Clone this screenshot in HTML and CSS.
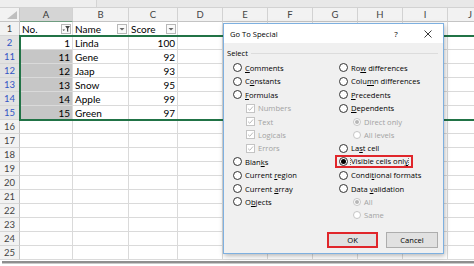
FILE: index.html
```html
<!DOCTYPE html>
<html>
<head>
<meta charset="utf-8">
<title>Go To Special</title>
<link rel="stylesheet" href="styles.css">
</head>
<body>
<div class="app">
  <div class="ribbon"><span class="namebox"></span><span class="fx"></span></div>
  <div class="sheet">
    <div class="corner"><svg width="10" height="8" viewBox="0 0 10 8"><polygon points="10,0 10,8 0,8" fill="#bfbfbf"/></svg></div>
    <div class="ch sel">A</div><div class="ch">B</div><div class="ch">C</div><div class="ch">D</div><div class="ch">E</div><div class="ch">F</div><div class="ch">G</div><div class="ch">H</div><div class="ch">I</div><div class="ch">J</div>

    <div class="rh">1</div>
    <div class="c hd">No.<span class="fb"><svg width="8" height="8" viewBox="0 0 8 8"><polygon points="0.5,4.5 3,4.5 1.75,6" fill="#444"/><polygon points="3.2,1 8,1 6.2,3.4 6.2,7 5,6.3 5,3.4" fill="#444"/></svg></span></div>
    <div class="c hd">Name<span class="fb"><svg width="8" height="8" viewBox="0 0 8 8"><polygon points="1.5,3 6.5,3 4,5.6" fill="#666"/></svg></span></div>
    <div class="c hd">Score<span class="fb"><svg width="8" height="8" viewBox="0 0 8 8"><polygon points="1.5,3 6.5,3 4,5.6" fill="#666"/></svg></span></div>
    <div class="c"></div><div class="c"></div><div class="c"></div><div class="c"></div><div class="c"></div><div class="c"></div><div class="c"></div>

    <div class="rh f">2</div><div class="c n">1</div><div class="c">Linda</div><div class="c n">100</div>
    <div class="c"></div><div class="c"></div><div class="c"></div><div class="c"></div><div class="c"></div><div class="c"></div><div class="c"></div>
    <div class="rh f">11</div><div class="c n g">11</div><div class="c">Gene</div><div class="c n">92</div>
    <div class="c"></div><div class="c"></div><div class="c"></div><div class="c"></div><div class="c"></div><div class="c"></div><div class="c"></div>
    <div class="rh f">12</div><div class="c n g">12</div><div class="c">Jaap</div><div class="c n">93</div>
    <div class="c"></div><div class="c"></div><div class="c"></div><div class="c"></div><div class="c"></div><div class="c"></div><div class="c"></div>
    <div class="rh f">13</div><div class="c n g">13</div><div class="c">Snow</div><div class="c n">95</div>
    <div class="c"></div><div class="c"></div><div class="c"></div><div class="c"></div><div class="c"></div><div class="c"></div><div class="c"></div>
    <div class="rh f">14</div><div class="c n g">14</div><div class="c">Apple</div><div class="c n">99</div>
    <div class="c"></div><div class="c"></div><div class="c"></div><div class="c"></div><div class="c"></div><div class="c"></div><div class="c"></div>
    <div class="rh f">15</div><div class="c n g">15</div><div class="c">Green</div><div class="c n">97</div>
    <div class="c"></div><div class="c"></div><div class="c"></div><div class="c"></div><div class="c"></div><div class="c"></div><div class="c"></div>

    <div class="rh">16</div><div class="c"></div><div class="c"></div><div class="c"></div><div class="c"></div><div class="c"></div><div class="c"></div><div class="c"></div><div class="c"></div><div class="c"></div><div class="c"></div>
    <div class="rh">17</div><div class="c"></div><div class="c"></div><div class="c"></div><div class="c"></div><div class="c"></div><div class="c"></div><div class="c"></div><div class="c"></div><div class="c"></div><div class="c"></div>
    <div class="rh">18</div><div class="c"></div><div class="c"></div><div class="c"></div><div class="c"></div><div class="c"></div><div class="c"></div><div class="c"></div><div class="c"></div><div class="c"></div><div class="c"></div>
    <div class="rh">19</div><div class="c"></div><div class="c"></div><div class="c"></div><div class="c"></div><div class="c"></div><div class="c"></div><div class="c"></div><div class="c"></div><div class="c"></div><div class="c"></div>
    <div class="rh">20</div><div class="c"></div><div class="c"></div><div class="c"></div><div class="c"></div><div class="c"></div><div class="c"></div><div class="c"></div><div class="c"></div><div class="c"></div><div class="c"></div>
    <div class="rh">21</div><div class="c"></div><div class="c"></div><div class="c"></div><div class="c"></div><div class="c"></div><div class="c"></div><div class="c"></div><div class="c"></div><div class="c"></div><div class="c"></div>
    <div class="rh">22</div><div class="c"></div><div class="c"></div><div class="c"></div><div class="c"></div><div class="c"></div><div class="c"></div><div class="c"></div><div class="c"></div><div class="c"></div><div class="c"></div>
    <div class="rh">23</div><div class="c"></div><div class="c"></div><div class="c"></div><div class="c"></div><div class="c"></div><div class="c"></div><div class="c"></div><div class="c"></div><div class="c"></div><div class="c"></div>
    <div class="rh">24</div><div class="c"></div><div class="c"></div><div class="c"></div><div class="c"></div><div class="c"></div><div class="c"></div><div class="c"></div><div class="c"></div><div class="c"></div><div class="c"></div>
    <div class="rh">25</div><div class="c"></div><div class="c"></div><div class="c"></div><div class="c"></div><div class="c"></div><div class="c"></div><div class="c"></div><div class="c"></div><div class="c"></div><div class="c"></div>

    <div class="selbox"><span class="handle"></span></div>
  </div>
  <div class="shadow"></div>

  <div class="dialog">
    <div class="titlebar">
      <span class="title">Go To Special</span>
      <span class="help">?</span>
      <span class="close"><svg width="8" height="8" viewBox="0 0 8 8"><path d="M0.5 0.5 L7.5 7.5 M7.5 0.5 L0.5 7.5" stroke="#222" stroke-width="0.9" fill="none"/></svg></span>
    </div>
    <div class="dbody">
      <div class="group"><span>Select</span><i class="rule"></i></div>
      <div class="cols">
        <div class="col left">
          <div class="opt"><span class="radio"></span><span><u>C</u>omments</span></div>
          <div class="opt"><span class="radio"></span><span>C<u>o</u>nstants</span></div>
          <div class="opt"><span class="radio"></span><span><u>F</u>ormulas</span></div>
          <div class="opt sub"><span class="check"><svg width="7" height="7" viewBox="0 0 7 7"><path d="M1 3.6 L2.8 5.3 L6 1.5" stroke="#b4b4b4" stroke-width="0.9" fill="none"/></svg></span><span>Numbers</span></div>
          <div class="opt sub"><span class="check"><svg width="7" height="7" viewBox="0 0 7 7"><path d="M1 3.6 L2.8 5.3 L6 1.5" stroke="#b4b4b4" stroke-width="0.9" fill="none"/></svg></span><span>Text</span></div>
          <div class="opt sub"><span class="check"><svg width="7" height="7" viewBox="0 0 7 7"><path d="M1 3.6 L2.8 5.3 L6 1.5" stroke="#b4b4b4" stroke-width="0.9" fill="none"/></svg></span><span>Logicals</span></div>
          <div class="opt sub"><span class="check"><svg width="7" height="7" viewBox="0 0 7 7"><path d="M1 3.6 L2.8 5.3 L6 1.5" stroke="#b4b4b4" stroke-width="0.9" fill="none"/></svg></span><span>Errors</span></div>
          <div class="opt"><span class="radio"></span><span>Blan<u>k</u>s</span></div>
          <div class="opt"><span class="radio"></span><span>Current <u>r</u>egion</span></div>
          <div class="opt"><span class="radio"></span><span>Current <u>a</u>rray</span></div>
          <div class="opt"><span class="radio"></span><span>O<u>b</u>jects</span></div>
        </div>
        <div class="col right">
          <div class="opt"><span class="radio"></span><span>Ro<u>w</u> differences</span></div>
          <div class="opt"><span class="radio"></span><span>Colu<u>m</u>n differences</span></div>
          <div class="opt"><span class="radio"></span><span><u>P</u>recedents</span></div>
          <div class="opt"><span class="radio"></span><span><u>D</u>ependents</span></div>
          <div class="opt sub"><span class="radio on"></span><span>Direct only</span></div>
          <div class="opt sub"><span class="radio"></span><span>All levels</span></div>
          <div class="opt"><span class="radio"></span><span>La<u>s</u>t cell</span></div>
          <div class="opt"><span class="hl"><span class="radio on"></span><span class="focus">Visible cells onl<u>y</u></span></span></div>
          <div class="opt"><span class="radio"></span><span>Condi<u>t</u>ional formats</span></div>
          <div class="opt"><span class="radio"></span><span>Data <u>v</u>alidation</span></div>
          <div class="opt sub"><span class="radio on"></span><span>All</span></div>
          <div class="opt sub"><span class="radio"></span><span>Same</span></div>
        </div>
      </div>
      <div class="buttons">
        <span class="btn ok">OK</span>
        <span class="btn cancel">Cancel</span>
      </div>
    </div>
  </div>
</div>
</body>
</html>
```

FILE: styles.css
```css
* { box-sizing: border-box; }
html, body { margin: 0; padding: 0; }
body {
  width: 474px;
  height: 266px;
  overflow: hidden;
  background: #fff;
  font-family: Lato, "Liberation Sans", sans-serif;
}
.app {
  position: relative;
  width: 474px;
  height: 266px;
  overflow: hidden;
}

/* top strip (formula bar remnant) */
.ribbon {
  height: 8px;
  display: flex;
  background: #e8e8e8;
  border-bottom: 1px solid #d2d2d2;
}
.namebox {
  width: 97px;
  background: #eeeeee;
  border-right: 1px solid #d4d4d4;
}
.fx { flex: 1; }

/* worksheet grid */
.sheet {
  position: relative;
  display: grid;
  grid-template-columns: 20px 53px 56px 49px repeat(7, 45px);
  grid-auto-rows: 14px;
  width: 493px;
  font-size: 10px;
  color: #000;
}
.corner {
  background: #f2f2f2;
  border-right: 1px solid #c8c8c8;
  border-bottom: 1px solid #c4c4c4;
  display: flex;
  align-items: flex-end;
  justify-content: flex-end;
  padding: 0 2px 2px 0;
}
.ch {
  background: #f2f2f2;
  border-right: 1px solid #d2d2d2;
  border-bottom: 1px solid #c4c4c4;
  color: #444;
  font-size: 9.5px;
  display: flex;
  align-items: center;
  justify-content: center;
}
.ch.sel {
  background: #d5d5d5;
  color: #333;
  border-bottom: 1px solid #6f9c80;
}
.rh {
  background: #f2f2f2;
  border-right: 1px solid #c4c4c4;
  border-bottom: 1px solid #d6d6d6;
  color: #444;
  font-size: 9.5px;
  display: flex;
  align-items: center;
  justify-content: center;
}
.rh.f {
  color: #3356c4;
  background: #e2e2e2;
}
.c {
  border-right: 1px solid #dadada;
  border-bottom: 1px solid #dadada;
  display: flex;
  align-items: center;
  padding: 1px 2px 0 2px;
  white-space: nowrap;
  overflow: hidden;
}
.c.n { justify-content: flex-end; }
.c.g { background: #c6c6c6; }
.c.hd { padding-right: 1px; }
.fb {
  margin-left: auto;
  width: 10px;
  height: 10px;
  border: 1px solid #b8b8b8;
  background: #fafafa;
  display: flex;
  align-items: center;
  justify-content: center;
  flex: none;
}

/* selection rectangle overlaying A2:A15 */
.selbox {
  position: absolute;
  grid-column: 2;
  grid-row: 3 / 9;
  top: -1px;
  left: -1px;
  right: -1px;
  bottom: -1px;
  border: 2px solid #217346;
}
.handle {
  position: absolute;
  right: -4px;
  bottom: -4px;
  width: 5px;
  height: 5px;
  background: #217346;
  border: 1px solid #fff;
}

.shadow {
  height: 6px;
  margin-left: 2px;
  background: linear-gradient(#ffffff 0 1px, #8e8e8e 1px 3px, #c9c9c9 3px 4px, #ffffff 4px);
}

/* dialog window */
.dialog {
  position: absolute;
  left: 223px;
  top: 23px;
  width: 221px;
  height: 231px;
  border: 1px solid #7eb0e0;
  background: #f0f0f0;
  box-shadow: 1px 2px 5px rgba(0, 0, 0, 0.28);
  display: flex;
  flex-direction: column;
  font-family: "Open Sans", "Noto Sans", sans-serif;
  font-size: 7.6px;
  color: #000;
}
.titlebar {
  flex: none;
  height: 19px;
  background: #fff;
  display: flex;
  align-items: center;
  padding-left: 6px;
}
.title { flex: 1; font-size: 7.6px; }
.help {
  width: 20px;
  text-align: center;
  font-size: 8px;
}
.close {
  width: 20px;
  margin-left: 12px;
  margin-right: 5px;
  display: flex;
  justify-content: center;
}
.dbody {
  flex: 1;
  display: flex;
  flex-direction: column;
  padding: 4px 5px 5px 3px;
}
.group {
  height: 12px;
  display: flex;
  align-items: center;
  gap: 3px;
}
.group .rule {
  flex: 1;
  border-top: 1px solid #dcdcdc;
}
.cols {
  display: flex;
  margin: 2.3px 0 0 6px;
}
.col {
  display: flex;
  flex-direction: column;
}
.col.left { width: 106px; }
.opt {
  height: 13.4px;
  display: flex;
  align-items: center;
  white-space: nowrap;
}
.opt u {
  text-decoration-thickness: 1px;
  text-underline-offset: 1px;
}
.radio {
  flex: none;
  width: 9px;
  height: 9px;
  border: 1px solid #333;
  border-radius: 50%;
  background: #fff;
  margin-right: 3px;
  display: flex;
  align-items: center;
  justify-content: center;
}
.radio.on::after {
  content: "";
  width: 5px;
  height: 5px;
  border-radius: 50%;
  background: #000;
}
.sub { color: #a2a2a2; }
.check {
  flex: none;
  width: 9px;
  height: 9px;
  border: 1px solid #c4c4c4;
  background: #fff;
  margin: 0 3px 0 13px;
  display: flex;
  align-items: center;
  justify-content: center;
}
.sub .radio {
  width: 8px;
  height: 8px;
  border-color: #c6c6c6;
  margin-left: 14px;
}
.sub .radio.on::after {
  width: 4px;
  height: 4px;
  background: #b6b6b6;
}
.hl {
  display: flex;
  align-items: center;
  height: 9px;
  padding: 0 3px 0 2px;
  margin-left: -2px;
  outline: 2px solid #e0262b;
}
.focus {
  outline: 1px dotted #777;
  line-height: 9px;
}
.buttons {
  margin-top: auto;
  display: flex;
  justify-content: flex-end;
  gap: 8px;
}
.btn {
  height: 16px;
  display: flex;
  align-items: center;
  justify-content: center;
  background: #e1e1e1;
  border: 1px solid #adadad;
}
.ok {
  width: 51px;
  border: 2px solid #e0262b;
}
.cancel { width: 52px; }
```
